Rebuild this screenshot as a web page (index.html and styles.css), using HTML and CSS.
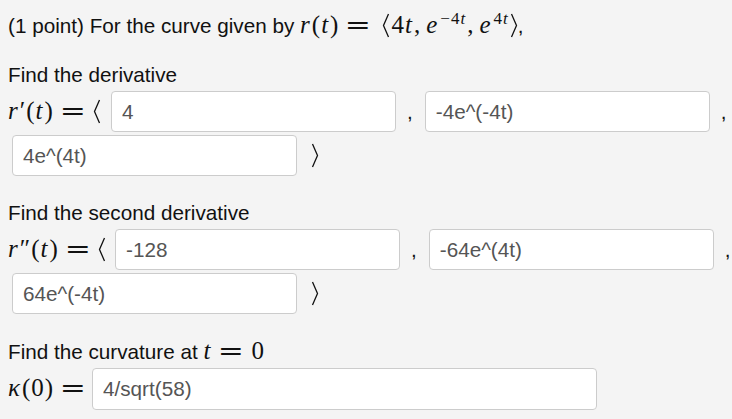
FILE: index.html
```html
<!DOCTYPE html>
<html lang="en">
<head>
    <meta charset="UTF-8">
    <meta name="viewport" content="width=device-width, initial-scale=1.0">
    <title>Curvature</title>
    <link rel="stylesheet" href="styles.css">
</head>
<body>
  <div class="problem">
    <p class="intro">(1 point) For the curve given by
      <span class="math"><var>r</var>(<var>t</var>)<span class="eq">=</span><svg class="ang open" viewBox="0 0 8 25"><path d="M6.5 1 L1.5 12.5 L6.5 24"/></svg>4<var>t</var>,<span class="sp"></span><var>e</var><sup>−4<var>t</var></sup>,<span class="sp"></span><var>e</var><sup>4<var>t</var></sup><svg class="ang close" viewBox="0 0 8 25"><path d="M1.5 1 L6.5 12.5 L1.5 24"/></svg></span>,</p>

    <section class="part">
      <p class="prompt">Find the derivative</p>
      <div class="row">
        <span class="math lead lead-1"><var>r</var>′(<var>t</var>)<span class="eq">=</span><svg class="ang open" viewBox="0 0 8 25"><path d="M6.5 1 L1.5 12.5 L6.5 24"/></svg></span>
        <input class="answer" type="text" value="4">
        <span class="sep">,</span>
        <input class="answer" type="text" value="-4e^(-4t)">
        <span class="sep last">,</span>
      </div>
      <div class="row cont">
        <input class="answer" type="text" value="4e^(4t)">
        <span class="math tail"><svg class="ang close" viewBox="0 0 8 25"><path d="M1.5 1 L6.5 12.5 L1.5 24"/></svg></span>
      </div>
    </section>

    <section class="part">
      <p class="prompt">Find the second derivative</p>
      <div class="row">
        <span class="math lead lead-2"><var>r</var>″(<var>t</var>)<span class="eq">=</span><svg class="ang open" viewBox="0 0 8 25"><path d="M6.5 1 L1.5 12.5 L6.5 24"/></svg></span>
        <input class="answer" type="text" value="-128">
        <span class="sep">,</span>
        <input class="answer" type="text" value="-64e^(4t)">
        <span class="sep last">,</span>
      </div>
      <div class="row cont">
        <input class="answer" type="text" value="64e^(-4t)">
        <span class="math tail"><svg class="ang close" viewBox="0 0 8 25"><path d="M1.5 1 L6.5 12.5 L1.5 24"/></svg></span>
      </div>
    </section>

    <section class="part">
      <p class="prompt">Find the curvature at <span class="math"><var>t</var><span class="eq">=</span>0</span></p>
      <div class="row">
        <span class="math lead lead-3"><var>κ</var>(0)<span class="eq">=</span></span>
        <input class="answer wide" type="text" value="4/sqrt(58)">
      </div>
    </section>
  </div>
</body>
</html>
```

FILE: styles.css
```css
/* Estilos gerais */
* {
  box-sizing: border-box;
}

body {
  margin: 0;
  background-color: #f4f4f4;
  font-family: 'Liberation Sans', Arial, sans-serif;
  font-size: 20.7px;
  color: #111;
}

p {
  margin: 0;
  line-height: 24px;
}

.problem {
  padding: 13px 8px;
}

/* Formulas */
.math {
  font-family: 'Liberation Serif', 'Times New Roman', serif;
  font-size: 25px;
  line-height: 24px;
  letter-spacing: 1px;
  white-space: nowrap;
}

.math var {
  font-style: italic;
  margin-right: 1px;
}

.math sup {
  font-size: 17px;
  line-height: 0;
  vertical-align: 9px;
  margin-left: 1px;
}

.eq {
  display: inline-block;
  font-family: 'DejaVu Sans', sans-serif;
  font-size: 24px;
  margin: 0 9px;
  transform: scaleX(1.3);
}

.sp {
  display: inline-block;
  width: 5px;
}

.ang {
  width: 8px;
  height: 25px;
  vertical-align: -5px;
}

.ang path {
  fill: none;
  stroke: #111;
  stroke-width: 1.3;
}

.intro .ang.open {
  margin: 0 2px 0 3px;
}

/* Answer rows */
.part {
  margin-top: 25px;
}

.prompt {
  margin-bottom: 4px;
}

.row {
  display: flex;
  align-items: baseline;
}

.row + .row {
  margin-top: 3px;
}

.cont {
  padding-left: 4px;
}

.lead {
  flex: 0 0 auto;
}

.lead-1 {
  width: 103px;
}

.lead-2 {
  width: 107px;
}

.lead-3 {
  width: 84px;
}

.tail {
  margin-left: 14px;
}

.answer {
  flex: 0 0 auto;
  width: 285px;
  height: 41px;
  margin: 0;
  padding: 0 10px;
  border: 1px solid #ccc;
  border-radius: 4px;
  background: #fff;
  font: inherit;
  color: #555;
}

.answer.wide {
  width: 505px;
  height: 42px;
}

.sep {
  flex: 0 0 auto;
  margin: 0 12px 0 11px;
}

.sep.last {
  margin-right: 0;
}
```
